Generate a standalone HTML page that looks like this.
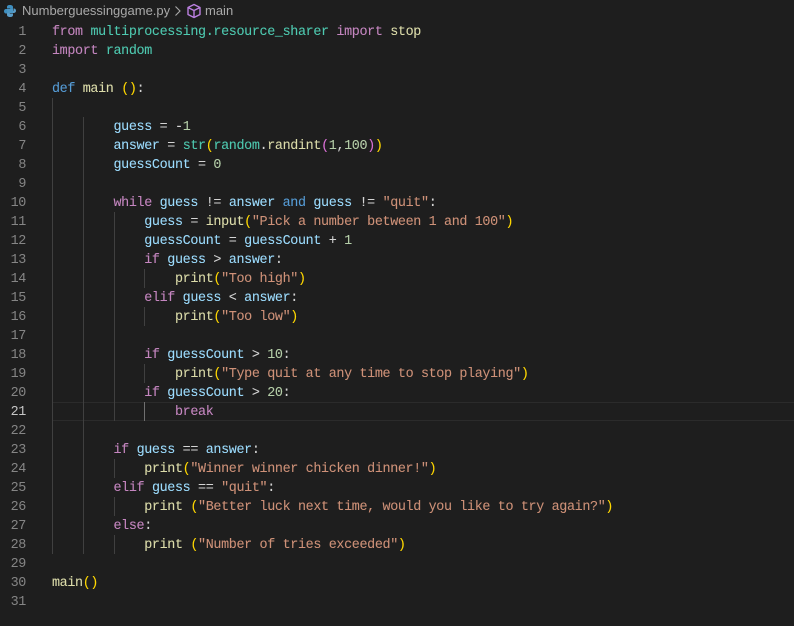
<!DOCTYPE html>
<html>
<head>
<meta charset="utf-8">
<style>
html,body{margin:0;padding:0;background:#1e1e1e;}
#root{position:relative;width:794px;height:626px;overflow:hidden;background:#1e1e1e;font-family:"Liberation Mono",monospace;font-size:13.4px;}
.ln{position:absolute;left:0;width:26px;text-align:right;height:19px;line-height:19px;margin-top:1px;color:#858585;font-size:13.4px;letter-spacing:-0.35px;}
.c{position:absolute;left:52px;white-space:pre;height:19px;line-height:19px;margin-top:1px;letter-spacing:-0.35px;color:#d4d4d4;-webkit-text-stroke:0.08px;}
.g{position:absolute;width:1px;background:#404040;}
.k{color:#c586c0}.b{color:#569cd6}.v{color:#9cdcfe}.f{color:#dcdcaa}.s{color:#ce9178}.n{color:#b5cea8}.t{color:#4ec9b0}.y{color:#ffd700}.p{color:#da70d6}
#crumb{position:absolute;left:0;top:0;height:22px;width:794px;font-family:"Liberation Sans",sans-serif;font-size:13px;color:#a9a9a9;line-height:22px;}
</style>
</head>
<body>
<div id="root">
<div id="crumb">
<svg style="position:absolute;left:3px;top:4px" width="14" height="14" viewBox="0 0 14 14"><path d="M7 1C4.500 1 4 2 4 3v1.500h3.200V5H3C1.800 5 1 6 1 7.200 1 8.500 1.800 9.500 3 9.500h1V8c0-1.100.9-2 2-2h2.500C9.400 6 10 5.400 10 4.500V3c0-1.200-1.200-2-3-2z" fill="#3f8fc0"/><path d="M7 13c2.500 0 3-1 3-2V9.500H6.800V9H11c1.200 0 2-1 2-2.200C13 5.500 12.200 4.500 11 4.500h-.5V6c0 1.100-.9 2-2 2H5.500C4.600 8 4 8.600 4 9.500V11c0 1.200 1.200 2 3 2z" fill="#5c9dc8"/><rect x="4" y="5" width="6" height="4" fill="#4a96c4"/></svg>
<span style="position:absolute;left:22px;top:0">Numberguessinggame.py</span>
<svg style="position:absolute;left:173px;top:5px" width="10" height="12" viewBox="0 0 10 12"><path d="M2.500 1.500L7 6l-4.500 4.500" fill="none" stroke="#a9a9a9" stroke-width="1.100"/></svg>
<svg style="position:absolute;left:186px;top:3px" width="16" height="16" viewBox="0 0 16 16"><path d="M8 1.500L14 4.500V11.500L8 14.500L2 11.500V4.500Z M2 4.500L8 7.500L14 4.500 M8 7.500V14.500" fill="none" stroke="#bb80e0" stroke-width="1.400" stroke-linejoin="round"/></svg>
<span style="position:absolute;left:205px;top:0">main</span>
</div>

<div style="position:absolute;left:52px;top:402px;width:742px;height:17px;border-top:1px solid #2b2b2b;border-bottom:1px solid #2b2b2b"></div>

<div class="g" style="left:52px;top:98px;height:456px"></div>
<div class="g" style="left:83px;top:117px;height:437px"></div>
<div class="g" style="left:114px;top:212px;height:209px"></div>
<div class="g" style="left:114px;top:459px;height:19px"></div>
<div class="g" style="left:114px;top:497px;height:19px"></div>
<div class="g" style="left:114px;top:535px;height:19px"></div>
<div class="g" style="left:144px;top:269px;height:19px"></div>
<div class="g" style="left:144px;top:307px;height:19px"></div>
<div class="g" style="left:144px;top:364px;height:19px"></div>
<div class="g" style="left:144px;top:402px;height:19px;background:#707070"></div>

<div class="ln" style="top:22px">1</div><div class="ln" style="top:41px">2</div><div class="ln" style="top:60px">3</div><div class="ln" style="top:79px">4</div><div class="ln" style="top:98px">5</div><div class="ln" style="top:117px">6</div><div class="ln" style="top:136px">7</div><div class="ln" style="top:155px">8</div><div class="ln" style="top:174px">9</div><div class="ln" style="top:193px">10</div><div class="ln" style="top:212px">11</div><div class="ln" style="top:231px">12</div><div class="ln" style="top:250px">13</div><div class="ln" style="top:269px">14</div><div class="ln" style="top:288px">15</div><div class="ln" style="top:307px">16</div><div class="ln" style="top:326px">17</div><div class="ln" style="top:345px">18</div><div class="ln" style="top:364px">19</div><div class="ln" style="top:383px">20</div><div class="ln" style="top:402px;color:#c6c6c6">21</div><div class="ln" style="top:421px">22</div><div class="ln" style="top:440px">23</div><div class="ln" style="top:459px">24</div><div class="ln" style="top:478px">25</div><div class="ln" style="top:497px">26</div><div class="ln" style="top:516px">27</div><div class="ln" style="top:535px">28</div><div class="ln" style="top:554px">29</div><div class="ln" style="top:573px">30</div><div class="ln" style="top:592px">31</div>

<div class="c" style="top:22px"><span class="k">from</span> <span class="t">multiprocessing.resource_sharer</span> <span class="k">import</span> <span class="f">stop</span></div>
<div class="c" style="top:41px"><span class="k">import</span> <span class="t">random</span></div>
<div class="c" style="top:79px"><span class="b">def</span> <span class="f">main</span> <span class="y">()</span>:</div>
<div class="c" style="top:117px">        <span class="v">guess</span> = -<span class="n">1</span></div>
<div class="c" style="top:136px">        <span class="v">answer</span> = <span class="t">str</span><span class="y">(</span><span class="t">random</span>.<span class="f">randint</span><span class="p">(</span><span class="n">1</span>,<span class="n">100</span><span class="p">)</span><span class="y">)</span></div>
<div class="c" style="top:155px">        <span class="v">guessCount</span> = <span class="n">0</span></div>
<div class="c" style="top:193px">        <span class="k">while</span> <span class="v">guess</span> != <span class="v">answer</span> <span class="b">and</span> <span class="v">guess</span> != <span class="s">"quit"</span>:</div>
<div class="c" style="top:212px">            <span class="v">guess</span> = <span class="f">input</span><span class="y">(</span><span class="s">"Pick a number between 1 and 100"</span><span class="y">)</span></div>
<div class="c" style="top:231px">            <span class="v">guessCount</span> = <span class="v">guessCount</span> + <span class="n">1</span></div>
<div class="c" style="top:250px">            <span class="k">if</span> <span class="v">guess</span> &gt; <span class="v">answer</span>:</div>
<div class="c" style="top:269px">                <span class="f">print</span><span class="y">(</span><span class="s">"Too high"</span><span class="y">)</span></div>
<div class="c" style="top:288px">            <span class="k">elif</span> <span class="v">guess</span> &lt; <span class="v">answer</span>:</div>
<div class="c" style="top:307px">                <span class="f">print</span><span class="y">(</span><span class="s">"Too low"</span><span class="y">)</span></div>
<div class="c" style="top:345px">            <span class="k">if</span> <span class="v">guessCount</span> &gt; <span class="n">10</span>:</div>
<div class="c" style="top:364px">                <span class="f">print</span><span class="y">(</span><span class="s">"Type quit at any time to stop playing"</span><span class="y">)</span></div>
<div class="c" style="top:383px">            <span class="k">if</span> <span class="v">guessCount</span> &gt; <span class="n">20</span>:</div>
<div class="c" style="top:402px">                <span class="k">break</span></div>
<div class="c" style="top:440px">        <span class="k">if</span> <span class="v">guess</span> == <span class="v">answer</span>:</div>
<div class="c" style="top:459px">            <span class="f">print</span><span class="y">(</span><span class="s">"Winner winner chicken dinner!"</span><span class="y">)</span></div>
<div class="c" style="top:478px">        <span class="k">elif</span> <span class="v">guess</span> == <span class="s">"quit"</span>:</div>
<div class="c" style="top:497px">            <span class="f">print</span> <span class="y">(</span><span class="s">"Better luck next time, would you like to try again?"</span><span class="y">)</span></div>
<div class="c" style="top:516px">        <span class="k">else</span>:</div>
<div class="c" style="top:535px">            <span class="f">print</span> <span class="y">(</span><span class="s">"Number of tries exceeded"</span><span class="y">)</span></div>
<div class="c" style="top:573px"><span class="f">main</span><span class="y">()</span></div>
</div>
</body>
</html>
